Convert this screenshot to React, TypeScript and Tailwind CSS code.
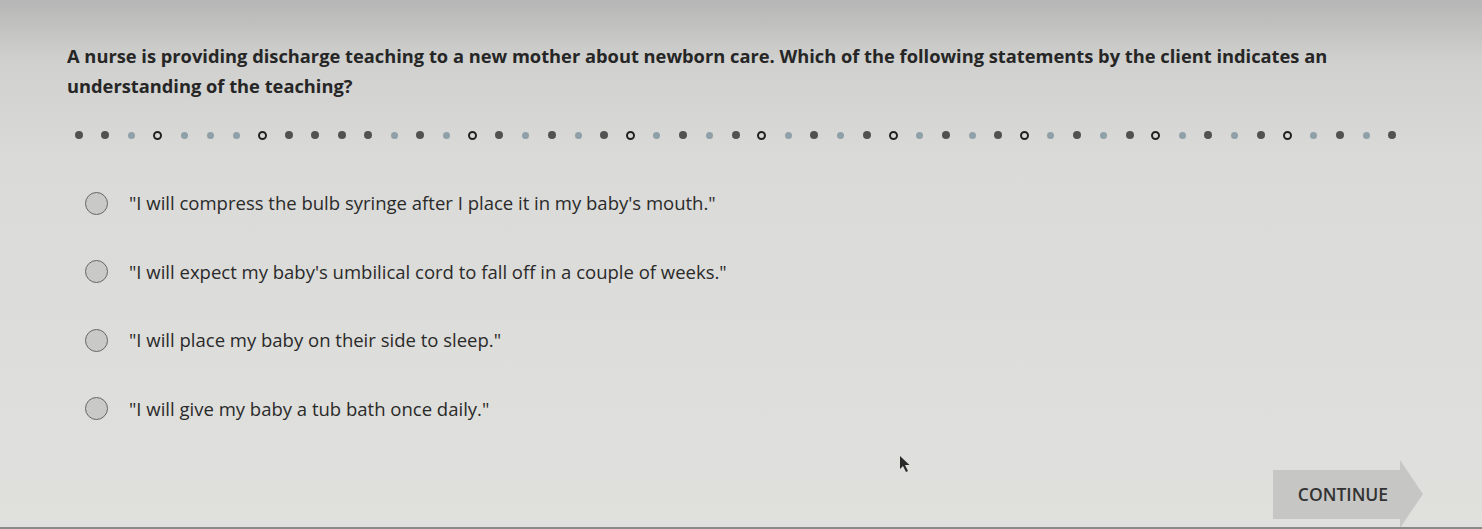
const DOTS = 'DDLRLLLRDDDDLDLRDLDLDRLDLDRLDLDRLDLDRLDLDRLDLDRLDLD';

const OPTIONS = [
  '"I will compress the bulb syringe after I place it in my baby\'s mouth."',
  '"I will expect my baby\'s umbilical cord to fall off in a couple of weeks."',
  '"I will place my baby on their side to sleep."',
  '"I will give my baby a tub bath once daily."',
];

function Dot({ kind }: { kind: string }) {
  if (kind === 'R') {
    return <span className="w-[9px] h-[9px] rounded-full border-2 border-[#222]" />;
  }
  if (kind === 'L') {
    return <span className="w-[7px] h-[7px] rounded-full bg-[#8fa0a8]" />;
  }
  return <span className="w-[8px] h-[8px] rounded-full bg-[#525252]" />;
}

export default function App() {
  return (
    <div
      className="relative min-h-[529px] overflow-hidden bg-[linear-gradient(180deg,#b6b6b6_0px,#d0d0ce_60px,#dadad8_160px,#e0e0dd_529px)] pt-[41px] pl-[67px] text-[#262626]"
      style={{ fontFamily: '"Open Sans", "Liberation Sans", sans-serif' }}
    >
      <h1 className="text-[18.3px] font-bold leading-[30px] pr-[130px]">
        A nurse is providing discharge teaching to a new mother about newborn care. Which of the following statements by the client indicates an understanding of the teaching?
      </h1>

      <div className="mt-[29px] ml-[7px] w-[1324px] h-[10px] flex items-center justify-between">
        {DOTS.split('').map((k, i) => (
          <span key={i} className="w-[10px] flex items-center justify-center">
            <Dot kind={k} />
          </span>
        ))}
      </div>

      <div className="mt-[29px] flex flex-col">
        {OPTIONS.map((o) => (
          <div key={o} className="h-[68.5px] flex items-center">
            <span className="ml-[18px] w-[23px] h-[23px] rounded-full border-[1.5px] border-[#666] bg-[#c9c9c8]" />
            <span className="ml-[21px] text-[18.5px] text-[#2a2a2a]">{o}</span>
          </div>
        ))}
      </div>

      <div className="mt-[17px] flex justify-end pr-[59px]">
        <button className="w-[150px] h-[68px] pr-[10px] bg-[#c6c6c4] text-[17.5px] font-semibold text-[#333] [clip-path:polygon(0_10px,127px_10px,127px_0,150px_34px,127px_68px,127px_59px,0_59px)]">
          CONTINUE
        </button>
      </div>

      <svg className="absolute left-[899px] top-[455px]" width="12" height="18" viewBox="0 0 12 18">
        <path d="M1 1 L1 14 L4 11 L7 17 L9 16 L6 10 L10.5 10 Z" fill="#2a2a2a" />
      </svg>
      <div className="absolute left-0 right-0 bottom-0 h-[2px] bg-[#8a8a88]" />
    </div>
  );
}
